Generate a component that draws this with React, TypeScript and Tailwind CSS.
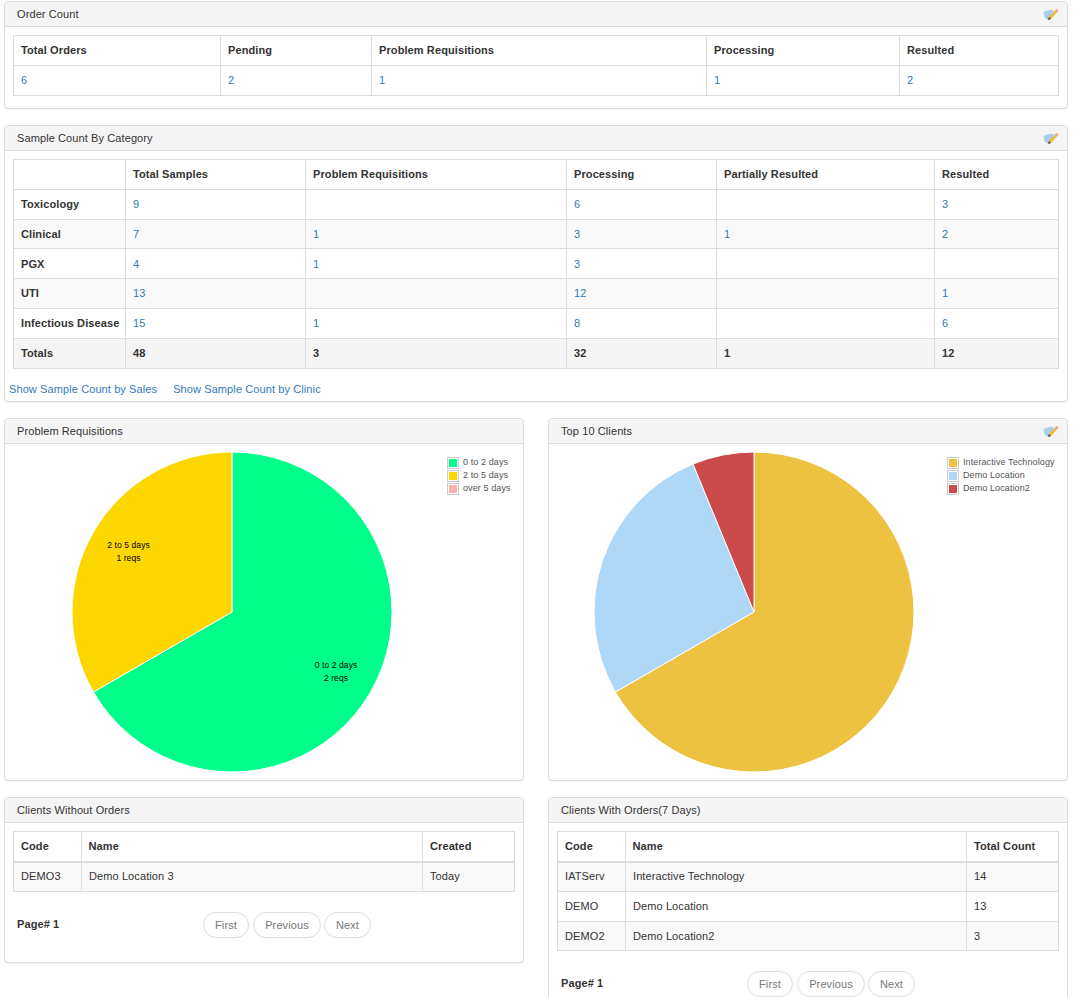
const link = 'text-[#337ab7]';

function EditIcon() {
  return (
    <svg width="16" height="14" viewBox="0 0 16 14" className="absolute right-[8px] top-[5px]">
      <path d="M0.5 5 L8 2.5 L11 4 L9 11 L4 12.5 Q1 11 0.5 5Z" fill="#a9cdec" />
      <path d="M6 10 L11.5 4 L13.5 6 L8 12 L5.5 12.5Z" fill="#f0c02c" />
      <path d="M11.5 4 L13 2 Q14.5 1.5 15 3 L15 4.5 L13.5 6Z" fill="#f4a58c" />
      <path d="M5 13 L6 10 L8 12Z" fill="#3d3d3d" />
    </svg>
  );
}

function Panel({ title, edit, className, children }: { title: string; edit?: boolean; className?: string; children: React.ReactNode }) {
  return (
    <div className={`bg-white border border-[#ddd] rounded-[4px] shadow-[0_1px_1px_rgba(0,0,0,0.05)] ${className ?? ''}`}>
      <div className="relative h-[25px] bg-[#f5f5f5] border-b border-[#ddd] rounded-t-[3px] pl-[12px] leading-[24px] text-[#333]">
        {title}
        {edit && <EditIcon />}
      </div>
      {children}
    </div>
  );
}

function OrderCount() {
  const heads = ['Total Orders', 'Pending', 'Problem Requisitions', 'Processing', 'Resulted'];
  const widths = ['w-[207px]', 'w-[151px]', 'w-[335px]', 'w-[193px]', 'w-[159px]'];
  const vals = ['6', '2', '1', '1', '2'];
  return (
    <Panel title="Order Count" edit className="h-[108px]">
      <div className="pt-[8px] px-[8px]">
        <table className="w-[1045px] table-fixed border-collapse">
          <thead>
            <tr className="h-[30px]">
              {heads.map((h, i) => (
                <th key={h} className={`${widths[i]} border border-[#ddd] px-[7px] text-left font-bold`}>{h}</th>
              ))}
            </tr>
          </thead>
          <tbody>
            <tr className="h-[30px]">
              {vals.map((v, i) => (
                <td key={i} className={`border border-[#ddd] px-[7px] ${link}`}>{v}</td>
              ))}
            </tr>
          </tbody>
        </table>
      </div>
    </Panel>
  );
}

const sampleRows = [
  ['Toxicology', '9', '', '6', '', '3'],
  ['Clinical', '7', '1', '3', '1', '2'],
  ['PGX', '4', '1', '3', '', ''],
  ['UTI', '13', '', '12', '', '1'],
  ['Infectious Disease', '15', '1', '8', '', '6'],
];

function SampleCount() {
  const heads = ['', 'Total Samples', 'Problem Requisitions', 'Processing', 'Partially Resulted', 'Resulted'];
  const widths = ['w-[112px]', 'w-[180px]', 'w-[261px]', 'w-[150px]', 'w-[218px]', 'w-[124px]'];
  return (
    <Panel title="Sample Count By Category" edit className="mt-[16px] h-[277px]">
      <div className="pt-[8px] px-[8px]">
        <table className="w-[1045px] table-fixed border-collapse">
          <thead>
            <tr className="h-[30px]">
              {heads.map((h, i) => (
                <th key={i} className={`${widths[i]} border border-[#ddd] px-[7px] text-left font-bold`}>{h}</th>
              ))}
            </tr>
          </thead>
          <tbody>
            {sampleRows.map((row, r) => (
              <tr key={row[0]} className={`h-[29.74px] ${r % 2 === 1 ? 'bg-[#f9f9f9]' : ''}`}>
                {row.map((v, c) => (
                  <td key={c} className={`border border-[#ddd] px-[7px] ${c === 0 ? 'font-bold whitespace-nowrap' : link}`}>{v}</td>
                ))}
              </tr>
            ))}
            <tr className="h-[30.3px] bg-[#f5f5f5] font-bold">
              {['Totals', '48', '3', '32', '1', '12'].map((v, i) => (
                <td key={i} className="border border-[#ddd] px-[7px]">{v}</td>
              ))}
            </tr>
          </tbody>
        </table>
        <div className={`flex gap-[16px] mt-[12px] -ml-[4px] ${link}`}>
          <span>Show Sample Count by Sales</span>
          <span>Show Sample Count by Clinic</span>
        </div>
      </div>
    </Panel>
  );
}

function slice(cx: number, cy: number, r: number, from: number, to: number) {
  const pt = (a: number) => {
    const t = (a * Math.PI) / 180;
    return `${(cx + r * Math.sin(t)).toFixed(2)} ${(cy - r * Math.cos(t)).toFixed(2)}`;
  };
  return `M${cx} ${cy} L${pt(from)} A${r} ${r} 0 ${to - from > 180 ? 1 : 0} 1 ${pt(to)}Z`;
}

function Legend({ items, className }: { items: [string, string][]; className: string }) {
  return (
    <div className={`absolute flex flex-col text-[9px] leading-[13px] text-[#545454] ${className}`}>
      {items.map(([label, color]) => (
        <div key={label} className="flex items-center h-[13px]">
          <span className="w-[12px] h-[12px] border border-[#ccc] p-[1px] mr-[4px] shrink-0">
            <span className="block w-full h-full" style={{ background: color }} />
          </span>
          <span className="whitespace-nowrap">{label}</span>
        </div>
      ))}
    </div>
  );
}

function Pie({ cx, slices, children }: { cx: number; slices: [number, number, string][]; children?: React.ReactNode }) {
  return (
    <svg width="518" height="337" viewBox="0 0 518 337" className="block">
      {slices.map(([a, b, color]) => (
        <path key={color} d={slice(cx, 168, 160, a, b)} fill={color} stroke="#fff" strokeWidth="1" />
      ))}
      {children}
    </svg>
  );
}

function PieLabel({ x, y, lines }: { x: number; y: number; lines: [string, string] }) {
  return (
    <text x={x} textAnchor="middle" fontSize="8.5" fill="#000" fontFamily="'Liberation Sans', Arial, sans-serif">
      <tspan x={x} y={y}>{lines[0]}</tspan>
      <tspan x={x} y={y + 13}>{lines[1]}</tspan>
    </text>
  );
}

function Charts() {
  return (
    <div className="grid grid-cols-[520px_520px] gap-[24px] mt-[16px]">
      <Panel title="Problem Requisitions" className="h-[363px]">
        <div className="relative">
          <Pie cx={227} slices={[[0, 240, '#00ff8a'], [240, 360, '#ffd700']]}>
            <PieLabel x={331} y={224} lines={['0 to 2 days', '2 reqs']} />
            <PieLabel x={123.5} y={104} lines={['2 to 5 days', '1 reqs']} />
          </Pie>
          <Legend
            className="left-[442px] top-[12px]"
            items={[['0 to 2 days', '#00ff8a'], ['2 to 5 days', '#ffd700'], ['over 5 days', '#ffb0b0']]}
          />
        </div>
      </Panel>
      <Panel title="Top 10 Clients" edit className="h-[363px]">
        <div className="relative">
          <Pie cx={205} slices={[[0, 240, '#edc240'], [240, 337.6, '#afd8f8'], [337.6, 360, '#cb4b4b']]} />
          <Legend
            className="left-[398px] top-[12px]"
            items={[['Interactive Technology', '#edc240'], ['Demo Location', '#afd8f8'], ['Demo Location2', '#cb4b4b']]}
          />
        </div>
      </Panel>
    </div>
  );
}

function Pager() {
  const btn = 'h-[26px] rounded-full border border-[#ddd] bg-white text-[#777] flex items-center justify-center';
  return (
    <div className="relative flex items-start mt-[20px] pl-[4px]">
      <span className="font-bold mt-[4px]">Page# 1</span>
      <div className="absolute left-[190px] top-0 flex">
        <span className={`${btn} w-[46px]`}>First</span>
        <span className={`${btn} w-[68px] ml-[4px]`}>Previous</span>
        <span className={`${btn} w-[47px] ml-[3px]`}>Next</span>
      </div>
    </div>
  );
}

function ClientTable({ last, rows }: { last: string; rows: string[][] }) {
  return (
    <table className="w-[501px] table-fixed border-collapse">
      <thead>
        <tr className="h-[30px] font-bold">
          <th className="w-[68px] border border-[#ddd] border-b-2 px-[7px] text-left font-bold">Code</th>
          <th className="w-[341px] border border-[#ddd] border-b-2 px-[6.5px] text-left font-bold">Name</th>
          <th className="w-[92px] border border-[#ddd] border-b-2 px-[7px] text-left font-bold">{last}</th>
        </tr>
      </thead>
      <tbody>
        {rows.map((row, r) => (
          <tr key={row[0]} className={`h-[29.8px] ${r % 2 === 0 ? 'bg-[#f9f9f9]' : ''}`}>
            {row.map((v, i) => (
              <td key={i} className="border border-[#ddd] px-[7px]">{v}</td>
            ))}
          </tr>
        ))}
      </tbody>
    </table>
  );
}

export default function App() {
  return (
    <div className="h-[997px] overflow-hidden pl-[4px] pr-[6px] pt-[1px] text-[11px] tracking-[0.1px] text-[#333] font-['Liberation_Sans',Arial,sans-serif]">
      <OrderCount />
      <SampleCount />
      <Charts />
      <div className="grid grid-cols-[520px_520px] gap-[24px] mt-[16px] items-start">
        <Panel title="Clients Without Orders" className="h-[166px]">
          <div className="pt-[8px] px-[8px]">
            <ClientTable last="Created" rows={[['DEMO3', 'Demo Location 3', 'Today']]} />
            <Pager />
          </div>
        </Panel>
        <Panel title="Clients With Orders(7 Days)" className="h-[226px]">
          <div className="pt-[8px] px-[8px]">
            <ClientTable
              last="Total Count"
              rows={[
                ['IATServ', 'Interactive Technology', '14'],
                ['DEMO', 'Demo Location', '13'],
                ['DEMO2', 'Demo Location2', '3'],
              ]}
            />
            <Pager />
          </div>
        </Panel>
      </div>
    </div>
  );
}
